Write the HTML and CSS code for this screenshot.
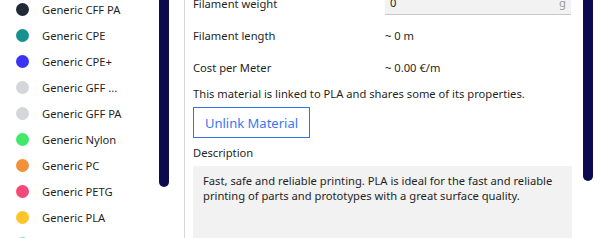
FILE: index.html
```html
<!DOCTYPE html>
<html lang="en">

<head>
    <meta charset="UTF-8">
    <title>Material settings</title>
    <link rel="stylesheet" href="styles.css">
</head>

<body>
    <!-- Material list -->
    <div class="list-panel">
        <ul class="materials">
            <li><span class="swatch" style="background:#202a36"></span>Generic CFF PA</li>
            <li><span class="swatch" style="background:#15928f"></span>Generic CPE</li>
            <li><span class="swatch" style="background:#3a35f5"></span>Generic CPE+</li>
            <li><span class="swatch" style="background:#d4d6da"></span>Generic GFF ...</li>
            <li><span class="swatch" style="background:#d4d6da"></span>Generic GFF PA</li>
            <li><span class="swatch" style="background:#42e86a"></span>Generic Nylon</li>
            <li><span class="swatch" style="background:#f3913a"></span>Generic PC</li>
            <li><span class="swatch" style="background:#f5487a"></span>Generic PETG</li>
            <li><span class="swatch" style="background:#fdc52a"></span>Generic PLA</li>
            <li><span class="swatch" style="background:#7fe8c8"></span>Generic PP</li>
        </ul>
        <div class="thumb thumb-left"></div>
    </div>

    <!-- Material details -->
    <div class="details">
        <div class="content">
            <div class="row">
                <span class="label">Filament weight</span>
                <div class="field"><span>0</span><span class="unit">g</span></div>
            </div>
            <div class="row">
                <span class="label">Filament length</span>
                <span class="value">~ 0 m</span>
            </div>
            <div class="row">
                <span class="label">Cost per Meter</span>
                <span class="value">~ 0.00 €/m</span>
            </div>
            <p class="note">This material is linked to PLA and shares some of its properties.</p>
            <button class="unlink">Unlink Material</button>
            <p class="caption">Description</p>
            <div class="description">
                Fast, safe and reliable printing. PLA is ideal for the fast and reliable
                printing of parts and prototypes with a great surface quality.
            </div>
        </div>
        <div class="thumb thumb-right"></div>
    </div>
</body>

</html>
```

FILE: styles.css
```css
body {
    margin: 0;
    height: 238px;
    overflow: hidden;
    display: flex;
    font-family: "Noto Sans", sans-serif;
    font-size: 11.2px;
    color: #1f1f1f;
    background-color: white;
}

/* left list */

.list-panel {
    width: 184px;
    display: flex;
    align-items: flex-start;
    border-right: 1px solid #d6d6d6;
}

.materials {
    width: 159px;
    margin: -4px 0 0 0;
    padding: 0;
    list-style: none;
}

.materials li {
    height: 26px;
    display: flex;
    align-items: center;
    padding-left: 16px;
}

.swatch {
    width: 13px;
    height: 13px;
    border-radius: 50%;
    margin-right: 13px;
}

.thumb {
    width: 10px;
    background-color: #0c0a4f;
    border-radius: 0 0 5px 5px;
}

.thumb-left {
    height: 187px;
}

.thumb-right {
    height: 181px;
    margin-left: 11px;
}

/* right details */

.details {
    display: flex;
    align-items: flex-start;
    padding-left: 8px;
}

.content {
    width: 379px;
    margin-top: -13px;
}

.row {
    height: 32px;
    display: flex;
    align-items: center;
}

.label {
    width: 192px;
}

.field {
    width: 176px;
    height: 23px;
    padding: 0 5px;
    display: flex;
    align-items: center;
    justify-content: space-between;
    background-color: #f2f2f2;
    border-bottom: 1px solid #c8c8c8;
}

.unit {
    color: #9a9a9a;
}

.note {
    margin: 3px 0 0 0;
    line-height: 16px;
}

.unlink {
    margin-top: 5px;
    width: 117px;
    height: 31px;
    font-family: "Noto Sans", sans-serif;
    font-size: 13px;
    color: #3878ef;
    background-color: white;
    border: 1px solid #3272e8;
    border-radius: 0;
    padding: 0;
}

.caption {
    margin: 7px 0 0 0;
    line-height: 16px;
}

.description {
    margin-top: 5px;
    height: 80px;
    padding: 7px 10px;
    line-height: 15px;
    background-color: #f2f2f2;
}
```
